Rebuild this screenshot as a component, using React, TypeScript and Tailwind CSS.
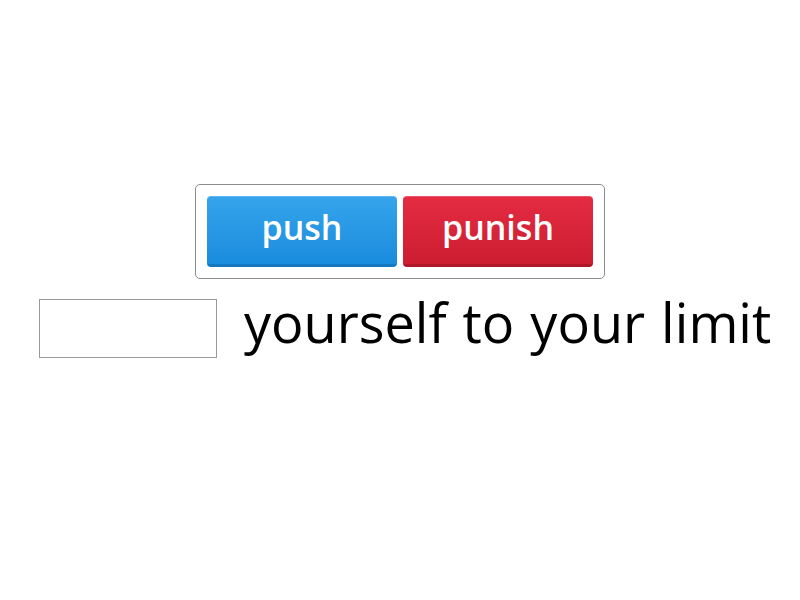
import React from "react";

const options = [
  { label: "push", tone: "blue" },
  { label: "punish", tone: "red" },
];

const toneClass: Record<string, string> = {
  blue: "bg-gradient-to-b from-[#35a4ec] to-[#1a8cdd] border-b-[3px] border-[#1579c2] border-t border-t-[#5cb6ef]",
  red: "bg-gradient-to-b from-[#e42b41] to-[#cc1d31] border-b-[3px] border-[#ad1728] border-t border-t-[#ea5466]",
};

export default function App() {
  return (
    <div className="min-h-screen bg-white font-['Open_Sans',sans-serif] flex flex-col items-center pt-[184px]">
      <div className="flex gap-[6px] p-[11px] border border-[#8c8c8c] rounded-[5px]">
        {options.map((opt) => (
          <div
            key={opt.label}
            className={`w-[190px] h-[71px] rounded-[4px] flex items-center justify-center text-white font-semibold text-[34px] pb-[6px] ${toneClass[opt.tone]}`}
          >
            {opt.label}
          </div>
        ))}
      </div>

      <div className="flex items-start mt-[20px] self-start ml-[39px]">
        <div className="w-[178px] h-[59px] border border-[#9a9a9a] bg-white" />
        <div className="ml-[27px] -mt-[4px] text-[54px] text-black leading-none [word-spacing:2px]">
          yourself to your limit
        </div>
      </div>
    </div>
  );
}
